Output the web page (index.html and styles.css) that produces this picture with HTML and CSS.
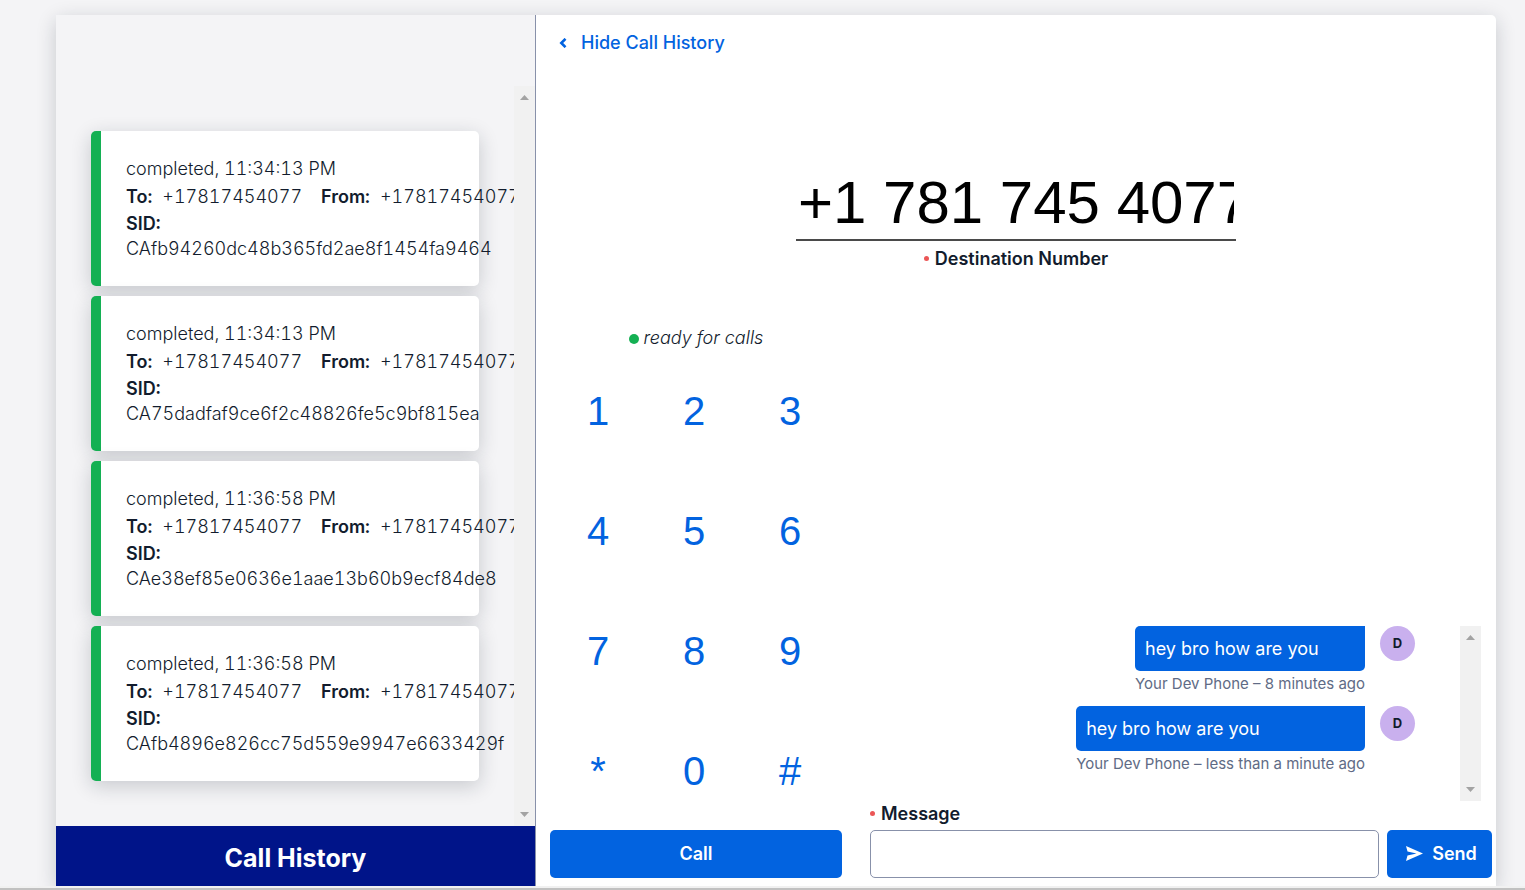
FILE: index.html
```
<!DOCTYPE html>
<html lang="en">
<head>
  <meta charset="UTF-8"/>
  <meta name="viewport" content="width=device-width, initial-scale=1.0"/>
  <title>Dev Phone</title>
  <link rel="stylesheet" href="styles.css">
</head>
<body>
  <div class="app">
    <aside class="history">
      <div class="history-body">
        <div class="history-list">
          <article class="call-card">
            <p>completed, 11:34:13 PM</p>
            <p class="numbers"><b>To:</b> <span>+17817454077</span> <b>From:</b> <span>+17817454077</span></p>
            <p><b>SID:</b></p>
            <p>CAfb94260dc48b365fd2ae8f1454fa9464</p>
          </article>
          <article class="call-card">
            <p>completed, 11:34:13 PM</p>
            <p class="numbers"><b>To:</b> <span>+17817454077</span> <b>From:</b> <span>+17817454077</span></p>
            <p><b>SID:</b></p>
            <p>CA75dadfaf9ce6f2c48826fe5c9bf815ea</p>
          </article>
          <article class="call-card">
            <p>completed, 11:36:58 PM</p>
            <p class="numbers"><b>To:</b> <span>+17817454077</span> <b>From:</b> <span>+17817454077</span></p>
            <p><b>SID:</b></p>
            <p>CAe38ef85e0636e1aae13b60b9ecf84de8</p>
          </article>
          <article class="call-card">
            <p>completed, 11:36:58 PM</p>
            <p class="numbers"><b>To:</b> <span>+17817454077</span> <b>From:</b> <span>+17817454077</span></p>
            <p><b>SID:</b></p>
            <p>CAfb4896e826cc75d559e9947e6633429f</p>
          </article>
        </div>
        <div class="scrollbar">
          <svg width="9" height="5" viewBox="0 0 9 5"><path d="M4.5 0L9 5H0z"/></svg>
          <svg width="9" height="5" viewBox="0 0 9 5"><path d="M0 0h9L4.5 5z"/></svg>
        </div>
      </div>
      <h2 class="history-title">Call History</h2>
    </aside>

    <main class="phone">
      <a href="#" class="toggle-history">
        <svg width="8" height="10" viewBox="0 0 8 10"><path d="M6.500 .8L2.300 5l4.200 4.200" fill="none" stroke="currentColor" stroke-width="2.6"/></svg>
        Hide Call History
      </a>

      <div class="destination">
        <input type="text" id="destination" value="+1 781 745 4077">
        <label for="destination" class="required">Destination Number</label>
      </div>

      <div class="panels">
        <section class="caller">
          <p class="status">ready for calls</p>
          <div class="keypad">
            <button type="button">1</button>
            <button type="button">2</button>
            <button type="button">3</button>
            <button type="button">4</button>
            <button type="button">5</button>
            <button type="button">6</button>
            <button type="button">7</button>
            <button type="button">8</button>
            <button type="button">9</button>
            <button type="button">*</button>
            <button type="button">0</button>
            <button type="button">#</button>
          </div>
          <button type="button" class="btn">Call</button>
        </section>

        <section class="messenger">
          <div class="chat">
            <div class="messages">
              <div class="message">
                <div class="message-body">
                  <p class="bubble">hey bro how are you</p>
                  <p class="meta">Your Dev Phone – 8 minutes ago</p>
                </div>
                <span class="avatar">D</span>
              </div>
              <div class="message">
                <div class="message-body">
                  <p class="bubble">hey bro how are you</p>
                  <p class="meta">Your Dev Phone – less than a minute ago</p>
                </div>
                <span class="avatar">D</span>
              </div>
            </div>
            <div class="scrollbar">
              <svg width="9" height="5" viewBox="0 0 9 5"><path d="M4.5 0L9 5H0z"/></svg>
              <svg width="9" height="5" viewBox="0 0 9 5"><path d="M0 0h9L4.5 5z"/></svg>
            </div>
          </div>
          <label for="message" class="required">Message</label>
          <div class="compose">
            <input type="text" id="message">
            <button type="button" class="btn">
              <svg width="17" height="15" viewBox="0 0 17 15"><path d="M0 0l17 7.500L0 15l1.500-5.600L10.500 7.500 1.500 5.600z" fill="currentColor"/></svg>
              Send
            </button>
          </div>
        </section>
      </div>
    </main>
  </div>
  <div class="page-edge"></div>
</body>
</html>
```
FILE: styles.css
```
* {
  box-sizing: border-box;
}

body {
  margin: 0;
  min-height: 100vh;
  display: flex;
  flex-direction: column;
  font-family: Inter, "Liberation Sans", sans-serif;
  font-size: 18px;
  line-height: 25px;
  color: #121c2d;
  background: #f4f4f6;
}

p, h2 {
  margin: 0;
}

b, label {
  font-weight: 600;
}

.app {
  flex: 1;
  display: grid;
  grid-template-columns: 1fr 2fr;
  margin: 15px 29px 0 56px;
  border-radius: 5px 5px 0 0;
  background: #fff;
  box-shadow: 0 5px 20px rgba(18, 28, 45, 0.2);
}

/* Call history */
.history {
  min-width: 0;
  display: flex;
  flex-direction: column;
  padding-top: 71px;
  border-right: 1px solid #8891aa;
  background: #f4f4f6;
}

.history-body {
  flex: 1;
  display: flex;
}

.history-list {
  flex: 1;
  min-width: 0;
  overflow: hidden;
  display: flex;
  flex-direction: column;
  gap: 10px;
  padding: 45px 35px;
}

.call-card {
  padding: 25px 0 25px 25px;
  border-left: 10px solid #14b053;
  border-radius: 5px;
  background: #fff;
  box-shadow: 0 5px 20px rgba(18, 28, 45, 0.2);
  font-weight: 300;
  font-variant-numeric: tabular-nums;
  white-space: nowrap;
}

.call-card .numbers {
  display: flex;
  gap: 10px;
  margin: 3px 0 2px;
}

.numbers span + b {
  margin-left: 9px;
}

.history-title {
  padding: 18px 16px 14px;
  font-size: 25px;
  line-height: 28px;
  font-weight: 700;
  text-align: center;
  color: #fff;
  background: #001489;
}

.scrollbar {
  width: 21px;
  display: flex;
  flex-direction: column;
  justify-content: space-between;
  align-items: center;
  padding: 9px 0;
  background: #f1f1f1;
  fill: #a3a3a3;
}

/* Phone */
.phone {
  min-width: 0;
  display: flex;
  flex-direction: column;
}

.toggle-history {
  align-self: flex-start;
  display: flex;
  align-items: center;
  gap: 14px;
  padding: 15px 23px;
  font-weight: 500;
  color: #0263e0;
  text-decoration: none;
}

.destination {
  width: 440px;
  margin: 99px auto 0;
  text-align: center;
}

.destination input {
  display: block;
  width: 100%;
  height: 72px;
  margin-bottom: 5px;
  padding: 0 2px 4px;
  border: none;
  border-bottom: 2px solid #4a4a4a;
  font-family: "Liberation Sans", sans-serif;
  font-size: 60px;
  color: #000;
  background: transparent;
}

.required::before {
  content: "";
  display: inline-block;
  width: 5px;
  height: 5px;
  margin-right: 6px;
  border-radius: 50%;
  vertical-align: 4px;
  background: #eb5656;
}

.panels {
  display: grid;
  grid-template-columns: 1fr 2fr;
  margin-top: auto;
  padding-bottom: 8px;
}

.caller {
  padding: 0 14px;
}

.status {
  font-weight: 300;
  text-align: center;
  font-style: italic;
}

.status::before {
  content: "";
  display: inline-block;
  width: 10px;
  height: 10px;
  margin-right: 5px;
  border-radius: 50%;
  background: #14b053;
}

.keypad {
  display: grid;
  grid-template-columns: repeat(3, 96px);
  grid-auto-rows: 120px;
}

.keypad button {
  padding: 2px 0 0;
  border: none;
  font-family: "Liberation Sans", sans-serif;
  font-size: 40px;
  color: #0263e0;
  background: none;
  cursor: pointer;
}

.btn {
  width: 100%;
  height: 48px;
  display: flex;
  justify-content: center;
  align-items: center;
  gap: 9px;
  padding: 0 0 2px;
  border: none;
  border-radius: 5px;
  font-family: inherit;
  font-size: 18px;
  font-weight: 600;
  color: #fff;
  background: #0263e0;
  cursor: pointer;
}

.messenger {
  display: flex;
  flex-direction: column;
  justify-content: flex-end;
  padding: 0 4px 0 14px;
}

.messenger label {
  margin-bottom: 4px;
}

.chat {
  height: 175px;
  display: flex;
  justify-content: space-between;
  margin-right: 11px;
}

.messages {
  flex: 1;
  padding-right: 45px;
}

.message {
  display: flex;
  justify-content: flex-end;
  gap: 15px;
  margin-bottom: 10px;
}

.bubble {
  padding: 10px;
  border-radius: 5px 0 5px 5px;
  color: #fff;
  background: #0263e0;
}

.meta {
  font-size: 15px;
  color: #606b85;
}

.avatar {
  width: 35px;
  height: 35px;
  border-radius: 50%;
  font-size: 13px;
  line-height: 35px;
  font-weight: 700;
  text-align: center;
  background: #c9b0ee;
}

.compose {
  display: flex;
  gap: 8px;
}

.compose input {
  flex: 1;
  min-width: 0;
  padding: 0 14px;
  border: 1px solid #8891aa;
  border-radius: 5px;
  font: inherit;
}

.compose .btn {
  width: 105px;
  padding-left: 4px;
}

.page-edge {
  height: 4px;
  border-bottom: 2px solid #c1c1c1;
  background: #f1f1f1;
  position: relative;
}
```
